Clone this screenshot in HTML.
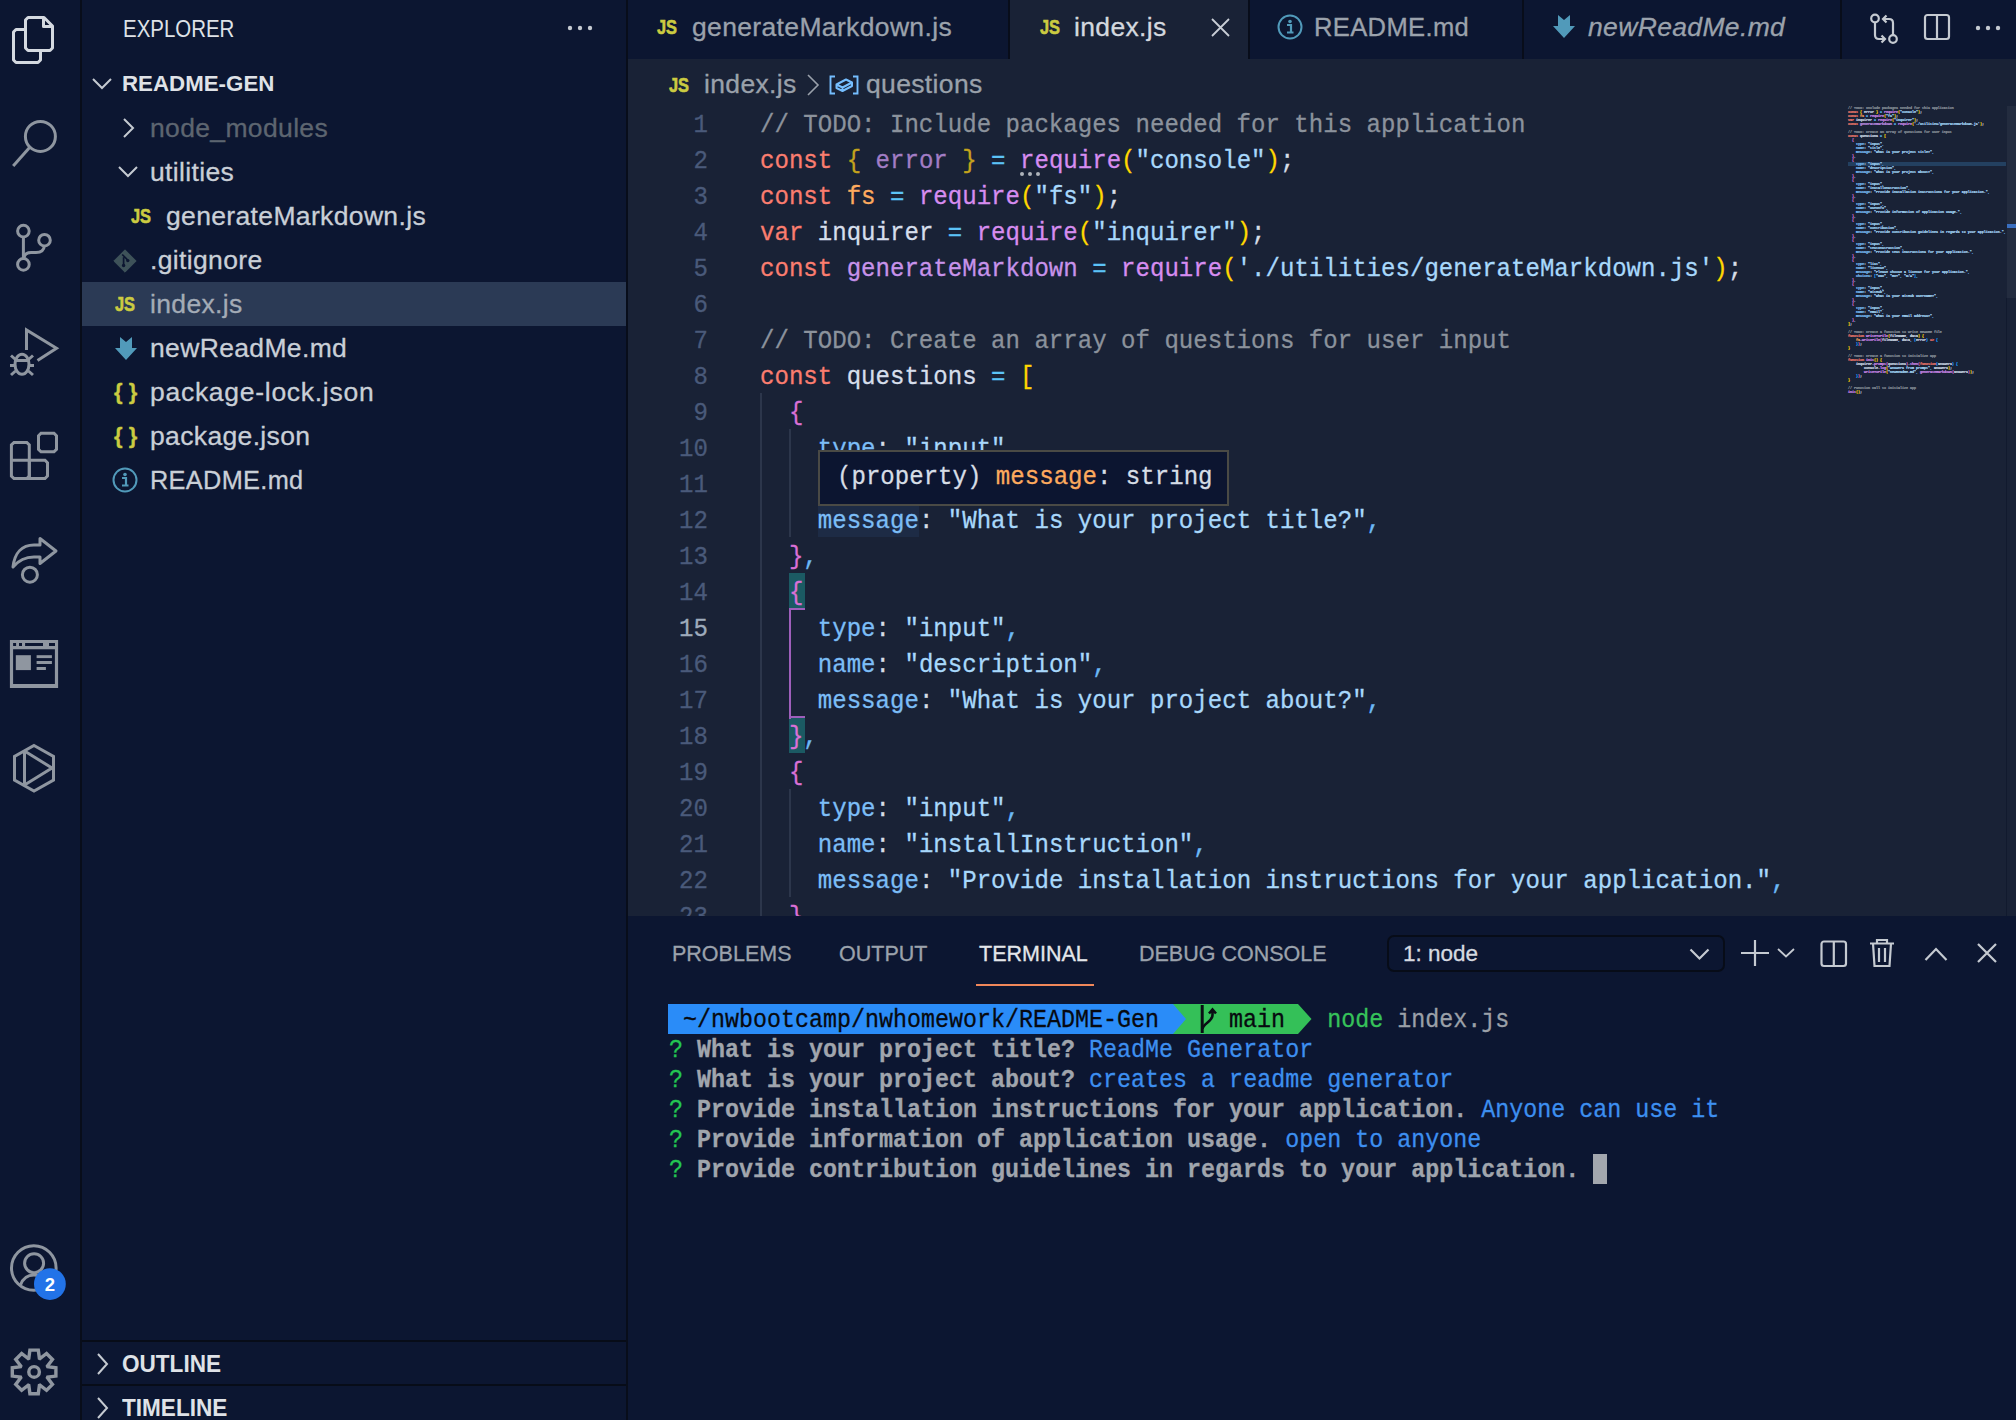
<!DOCTYPE html>
<html><head><meta charset="utf-8"><style>
*{box-sizing:border-box;margin:0;padding:0}
html,body{width:2016px;height:1420px;overflow:hidden;background:#0c1631;font-family:"Liberation Sans",sans-serif}
.code,.row,.tab,.bc,.term,.ptab,.ln{-webkit-text-stroke:0.3px currentColor}
.abs{position:absolute}
.row{position:absolute;left:0;width:544px;height:44px;font-size:26.5px;letter-spacing:0.35px;color:#c9cfd7;line-height:44px;white-space:pre}
.js{font-weight:bold;color:#cbcb41;font-size:20.5px;letter-spacing:0;white-space:pre;transform:scaleX(0.8);transform-origin:0 0;-webkit-text-stroke:0.6px #cbcb41}
.brace{font-weight:bold;color:#cbcb41;font-size:22px;letter-spacing:0;white-space:pre}
.code{font-family:"Liberation Mono",monospace;font-size:26.5px;line-height:36px;white-space:pre;transform-origin:0 0}
.cl{height:36px}
.ln{left:600px;width:108px;text-align:right;font-family:"Liberation Mono",monospace;font-size:26.5px;line-height:36px;transform:scaleX(0.90818);transform-origin:100% 0}
.mm{font-family:"Liberation Mono",monospace;font-size:26px;line-height:48px;white-space:pre;transform:scale(0.0833,0.0833);transform-origin:0 0;font-weight:bold}
.ml{height:48px}
.bc{top:62px;height:44px;line-height:44px;font-size:26.5px;letter-spacing:0.35px;color:#9aa1ab;white-space:pre}
.tab{top:5px;height:44px;line-height:44px;font-size:26.5px;letter-spacing:0.35px;white-space:pre}
.ptab{top:932px;height:44px;line-height:44px;font-size:21.5px;white-space:pre}
.term{font-family:"Liberation Mono",monospace;font-size:26px;line-height:30px;white-space:pre;transform-origin:0 0}
</style></head><body>
<div class="abs" style="left:0;top:0;width:80px;height:1420px;background:#0c1631"></div>
<svg class="abs" style="left:0;top:0" width="80" height="1420" viewBox="0 0 80 1420" fill="none" stroke-width="3">
<g stroke="#d4d9e0" stroke-linejoin="round">
<path d="M28 17.5 H44 L52.5 26 V48 L50 50.5 H28 L25.5 48 V20 Z"/>
<path d="M43.5 17.5 V26.5 H52.5"/>
<path d="M25.5 29.5 H16 L13.5 32 V60 L16 62.5 H38 L40.5 60 V50.5"/>
</g>
<g stroke="#8f96a0">
<circle cx="40.4" cy="136.4" r="15"/>
<path d="M29.8 147.2 L13.2 166"/>
<circle cx="23.4" cy="231.1" r="5.8"/>
<circle cx="23.4" cy="264.4" r="5.8"/>
<circle cx="44.5" cy="240.2" r="5.8"/>
<path d="M23.4 237 V258.6"/>
<path d="M44.3 246 C44 250.5 41 252.5 36 252.5 L31 252.5 C27 252.5 24.5 254.5 24 258"/>
<path d="M26.5 350 V330 L56.5 348.3 L37.5 360.5"/>
<ellipse cx="22" cy="364.3" rx="7" ry="10"/>
<path d="M15 360.5 H29 M10 365.5 H15 M29 365.5 H34 M11 355.5 L15.5 359.5 M33 355.5 L28.5 359.5 M11 375 L15.5 371 M33 375 L28.5 371"/>
<path d="M14 442.4 H26.8 L29.3 444.9 V476 L26.8 478.5 H14 L11.4 476 V444.9 Z"/>
<path d="M11.4 460.3 H45 L47.5 462.8 V476 L45 478.5 H26"/>
<path d="M29.3 460.3 V478.5"/>
<path d="M41 433.3 H54 L56.5 435.8 V449.3 L54 451.8 H41 L38.5 449.3 V435.8 Z"/>
<path d="M40 538.5 L56 551 L40 563.5 V557 H34 C25 557 18 561 13 567 C14.5 553 22 545 34 545 H40 Z" stroke-linejoin="round"/>
<circle cx="29.9" cy="574.7" r="7.5"/>
<path d="M34 745.5 L53.5 756.5 V780 L34 791 L14.5 780 V756.5 Z M24.5 751 V785 M24.5 751 L52 768 L24.5 785"/>
<circle cx="33.8" cy="1268" r="22.3"/>
<circle cx="34.1" cy="1263.2" r="9.5"/>
<path d="M20.5 1285 C23 1278 28 1275 34 1275 C40 1275 45 1278 47.5 1285"/>
<path d="M28.82 1358.29 L29.91 1350.10 L38.29 1350.10 L39.38 1358.29 L39.99 1358.54 L46.55 1353.52 L52.48 1359.45 L47.46 1366.01 L47.71 1366.62 L55.90 1367.71 L55.90 1376.09 L47.71 1377.18 L47.46 1377.79 L52.48 1384.35 L46.55 1390.28 L39.99 1385.26 L39.38 1385.51 L38.29 1393.70 L29.91 1393.70 L28.82 1385.51 L28.21 1385.26 L21.65 1390.28 L15.72 1384.35 L20.74 1377.79 L20.49 1377.18 L12.30 1376.09 L12.30 1367.71 L20.49 1366.62 L20.74 1366.01 L15.72 1359.45 L21.65 1353.52 L28.21 1358.54 Z" stroke-width="3.4" stroke-linejoin="miter"/>
<circle cx="34.1" cy="1371.9" r="5.3" stroke-width="3.4"/>
</g>
<g fill="#8f96a0" stroke="none">
<path d="M9.9 639.9 H58.1 V688.1 H9.9 Z M13.1 649.2 V684 H54.9 V649.2 Z M13.1 643 V646 H16.1 V643 Z M19 643 V646 H22 V643 Z M25.1 643 V646 H43 V643 Z M49 643 V646 H55 V643 Z" fill-rule="evenodd"/>
<rect x="15.8" y="655.2" width="15.1" height="14.9"/>
<rect x="36.6" y="655.2" width="15.3" height="2.9"/>
<rect x="36.6" y="661" width="15.3" height="3"/>
<rect x="36.6" y="667" width="9.3" height="3"/>
</g>
<circle cx="49.9" cy="1284.1" r="15.9" fill="#2273e8"/>
<text x="49.9" y="1290.8" fill="#fff" font-family="Liberation Sans" font-weight="bold" font-size="18.5" text-anchor="middle">2</text>
</svg>
<div class="abs" style="left:80px;top:0;width:2px;height:1420px;background:#080d1a"></div>
<div class="abs" style="left:82px;top:0;width:544px;height:1420px;background:#0c1631">
<div class="abs" style="left:41px;top:0.5px;height:56px;line-height:56px;font-size:23.5px;color:#dfe2e7;transform:scaleX(0.87);transform-origin:0 0">EXPLORER</div>
<svg class="abs" style="left:484px;top:20px" width="30" height="16"><circle cx="4" cy="8" r="2.2" fill="#c5cad1"/><circle cx="14" cy="8" r="2.2" fill="#c5cad1"/><circle cx="24" cy="8" r="2.2" fill="#c5cad1"/></svg>
<svg class="abs" style="left:9px;top:75px" width="22" height="16"><path d="M2 4 L11 13 L20 4" stroke="#c5cad1" stroke-width="2" fill="none"/></svg>
<div class="abs" style="left:40px;top:62px;height:44px;line-height:44px;font-size:22.3px;font-weight:bold;color:#dfe2e7;letter-spacing:0">README-GEN</div>
<div class="row" style="top:106px"><svg class="abs" style="left:40px;top:11px" width="14" height="22"><path d="M2 2 L11 11 L2 20" stroke="#c5cad1" stroke-width="2" fill="none"/></svg><span class="abs" style="left:68px;color:#5d6570">node_modules</span></div>
<div class="row" style="top:150px"><svg class="abs" style="left:35px;top:15px" width="22" height="14"><path d="M2 2 L11 11 L20 2" stroke="#c5cad1" stroke-width="2" fill="none"/></svg><span class="abs" style="left:68px">utilities</span></div>
<div class="row" style="top:194px"><span class="abs js" style="left:49px">JS</span><span class="abs" style="left:84px">generateMarkdown.js</span></div>
<div class="row" style="top:238px"><svg class="abs" style="left:31.3px;top:10.8px" width="24" height="24" viewBox="0 0 24 24"><path d="M12 0.8 L23.2 12 L12 23.2 L0.8 12 Z" fill="#3e5259" stroke="#3e5259" stroke-width="1" stroke-linejoin="round"/><path d="M9.2 5.5 L14.8 11.1 M10.6 8.3 V16.5" stroke="#0c1631" stroke-width="1.7" fill="none"/><circle cx="10.6" cy="16.5" r="1.7" fill="#0c1631"/><circle cx="14.8" cy="11.6" r="1.7" fill="#0c1631"/></svg><span class="abs" style="left:68px">.gitignore</span></div>
<div class="row" style="top:282px;background:#2b3a55"><span class="abs js" style="left:33px">JS</span><span class="abs" style="left:68px;color:#a3abb6">index.js</span></div>
<div class="row" style="top:326px"><svg class="abs" style="left:33px;top:11px" width="22" height="24" viewBox="0 0 22 24"><path d="M5 0 L11 5 L17 0 L17 11 L22 11 L11 23 L0 11 L5 11 Z" fill="#519aba"/></svg><span class="abs" style="left:68px">newReadMe.md</span></div>
<div class="row" style="top:370px"><span class="abs brace" style="left:32px">{ }</span><span class="abs" style="left:68px;letter-spacing:0.72px">package-lock.json</span></div>
<div class="row" style="top:414px"><span class="abs brace" style="left:32px">{ }</span><span class="abs" style="left:68px">package.json</span></div>
<div class="row" style="top:458px"><svg class="abs" style="left:30px;top:9px" width="26" height="26" viewBox="0 0 26 26"><circle cx="13" cy="13" r="11.5" stroke="#519aba" stroke-width="2" fill="none"/><circle cx="13" cy="7.5" r="1.8" fill="#519aba"/><path d="M10 11 L14 11 L14 18 M10 18.5 L16.5 18.5" stroke="#519aba" stroke-width="2.2" fill="none"/></svg><span class="abs" style="left:68px;transform:scaleX(0.955);transform-origin:0 0">README.md</span></div>
<div class="abs" style="left:0;top:1340px;width:544px;height:2px;background:#070c18"></div>
<svg class="abs" style="left:14px;top:1352px" width="14" height="24"><path d="M2 2 L11 12 L2 22" stroke="#c5cad1" stroke-width="2" fill="none"/></svg>
<div class="abs" style="left:40px;top:1342px;height:44px;line-height:44px;font-size:24px;font-weight:bold;color:#dfe2e7;transform:scaleX(0.94);transform-origin:0 0">OUTLINE</div>
<div class="abs" style="left:0;top:1384px;width:544px;height:2px;background:#070c18"></div>
<svg class="abs" style="left:14px;top:1396px" width="14" height="24"><path d="M2 2 L11 12 L2 22" stroke="#c5cad1" stroke-width="2" fill="none"/></svg>
<div class="abs" style="left:40px;top:1386px;height:44px;line-height:44px;font-size:24px;font-weight:bold;color:#dfe2e7;transform:scaleX(0.94);transform-origin:0 0">TIMELINE</div>
</div>

<div class="abs" style="left:626px;top:0;width:2px;height:1420px;background:#080d1a"></div>
<div class="abs" style="left:628.00px;top:0.00px;width:1388.00px;height:59.00px;background:#0c1631;"></div><div class="abs" style="left:1010.00px;top:0.00px;width:238.00px;height:59.00px;background:#192236;"></div><div class="abs" style="left:1008.00px;top:0.00px;width:2.00px;height:59.00px;background:#080d1a;"></div><div class="abs" style="left:1248.00px;top:0.00px;width:2.00px;height:59.00px;background:#080d1a;"></div><div class="abs" style="left:1522.00px;top:0.00px;width:2.00px;height:59.00px;background:#080d1a;"></div><div class="abs" style="left:1840.00px;top:0.00px;width:2.00px;height:59.00px;background:#080d1a;"></div><span class="abs js" style="left:657px;top:16px;line-height:22px">JS</span><div class="abs tab" style="left:692px;color:#9ba2ac">generateMarkdown.js</div><span class="abs js" style="left:1040px;top:16px;line-height:22px">JS</span><div class="abs tab" style="left:1074px;color:#d3d8df">index.js</div><svg class="abs" style="left:1210px;top:17px" width="21" height="21"><path d="M2 2 L19 19 M19 2 L2 19" stroke="#c9ced6" stroke-width="1.8"/></svg><svg class="abs" style="left:1277px;top:14px" width="26" height="26" viewBox="0 0 26 26"><circle cx="13" cy="13" r="11.5" stroke="#519aba" stroke-width="2" fill="none"/><circle cx="13" cy="7.5" r="1.8" fill="#519aba"/><path d="M10 11 L14 11 L14 18 M10 18.5 L16.5 18.5" stroke="#519aba" stroke-width="2.2" fill="none"/></svg><div class="abs tab" style="left:1314px;color:#9ba2ac;transform:scaleX(0.965);transform-origin:0 0">README.md</div><svg class="abs" style="left:1553px;top:15px" width="22" height="24" viewBox="0 0 22 24"><path d="M5 0 L11 5 L17 0 L17 11 L22 11 L11 23 L0 11 L5 11 Z" fill="#519aba"/></svg><div class="abs tab" style="left:1588px;color:#9ba2ac;font-style:italic">newReadMe.md</div><svg class="abs" style="left:1862px;top:8px" width="154" height="40" viewBox="0 0 154 40" fill="none" stroke="#c5cad1" stroke-width="2.2">
<circle cx="13" cy="10.5" r="3.8"/><circle cx="31" cy="31" r="3.8"/>
<path d="M13 14.3 V27 Q13 31 17 31 H23 M19.5 27.5 L23 31 L19.5 34.5"/>
<path d="M31 27.2 V15 Q31 11 27 11 H21 M24.5 7.5 L21 11 L24.5 14.5"/>
<rect x="63" y="7" width="24" height="24" rx="2.5"/><path d="M75 7 V31"/>
</svg><svg class="abs" style="left:1973px;top:22px" width="32" height="12"><circle cx="5" cy="6" r="2.2" fill="#c5cad1"/><circle cx="15" cy="6" r="2.2" fill="#c5cad1"/><circle cx="25" cy="6" r="2.2" fill="#c5cad1"/></svg>
<div class="abs" style="left:628px;top:59px;width:1388px;height:857px;background:#192236;overflow:hidden"><div class="abs" style="left:-628px;top:-59px;width:2016px;height:1420px"><div class="abs" style="left:760.20px;top:393.00px;width:1.60px;height:523.00px;background:#2c364b;"></div><div class="abs" style="left:789.08px;top:429.00px;width:1.60px;height:108.00px;background:#2c364b;"></div><div class="abs" style="left:789.08px;top:789.00px;width:1.60px;height:108.00px;background:#2c364b;"></div><div class="abs" style="left:789.08px;top:573.00px;width:15.44px;height:36.00px;background:#1b5a63;"></div><div class="abs" style="left:789.08px;top:717.00px;width:15.44px;height:36.00px;background:#1b5a63;"></div><div class="abs" style="left:789.08px;top:607.50px;width:2.20px;height:111.00px;background:#9e5fbb;"></div><div class="abs" style="left:789.08px;top:607.50px;width:15.44px;height:2.20px;background:#9e5fbb;"></div><div class="abs" style="left:789.08px;top:716.30px;width:15.44px;height:2.20px;background:#9e5fbb;"></div><div class="abs" style="left:817.96px;top:501.00px;width:101.08px;height:36.00px;background:#1d2b45;"></div><div class="abs ln" style="top:107.00px;color:#4a5a7a">1</div><div class="abs ln" style="top:143.00px;color:#4a5a7a">2</div><div class="abs ln" style="top:179.00px;color:#4a5a7a">3</div><div class="abs ln" style="top:215.00px;color:#4a5a7a">4</div><div class="abs ln" style="top:251.00px;color:#4a5a7a">5</div><div class="abs ln" style="top:287.00px;color:#4a5a7a">6</div><div class="abs ln" style="top:323.00px;color:#4a5a7a">7</div><div class="abs ln" style="top:359.00px;color:#4a5a7a">8</div><div class="abs ln" style="top:395.00px;color:#4a5a7a">9</div><div class="abs ln" style="top:431.00px;color:#4a5a7a">10</div><div class="abs ln" style="top:467.00px;color:#4a5a7a">11</div><div class="abs ln" style="top:503.00px;color:#4a5a7a">12</div><div class="abs ln" style="top:539.00px;color:#4a5a7a">13</div><div class="abs ln" style="top:575.00px;color:#4a5a7a">14</div><div class="abs ln" style="top:611.00px;color:#9eabbb">15</div><div class="abs ln" style="top:647.00px;color:#4a5a7a">16</div><div class="abs ln" style="top:683.00px;color:#4a5a7a">17</div><div class="abs ln" style="top:719.00px;color:#4a5a7a">18</div><div class="abs ln" style="top:755.00px;color:#4a5a7a">19</div><div class="abs ln" style="top:791.00px;color:#4a5a7a">20</div><div class="abs ln" style="top:827.00px;color:#4a5a7a">21</div><div class="abs ln" style="top:863.00px;color:#4a5a7a">22</div><div class="abs ln" style="top:899.00px;color:#4a5a7a">23</div><div class="abs code" style="left:760.20px;top:107.00px;transform:scaleX(0.90818)"><div class="cl"><span style="color:#8b929c">// TODO: Include packages needed for this application</span></div><div class="cl"><span style="color:#fa7d6f">const</span><span style="color:#d6deeb"> </span><span style="color:#ffd700;color:#c4a31c">{</span><span style="color:#d6deeb"> </span><span style="color:#d6deeb;color:#a27dc4">error</span><span style="color:#d6deeb"> </span><span style="color:#ffd700;color:#c4a31c">}</span><span style="color:#d6deeb"> </span><span style="color:#5cc3f7">=</span><span style="color:#d6deeb"> </span><span style="color:#d68cf0">require</span><span style="color:#ffd700">(</span><span style="color:#a8d8fb">&quot;console&quot;</span><span style="color:#ffd700">)</span><span style="color:#d6dde6">;</span></div><div class="cl"><span style="color:#fa7d6f">const</span><span style="color:#d6deeb"> </span><span style="color:#fdaa5e">fs</span><span style="color:#d6deeb"> </span><span style="color:#5cc3f7">=</span><span style="color:#d6deeb"> </span><span style="color:#d68cf0">require</span><span style="color:#ffd700">(</span><span style="color:#a8d8fb">&quot;fs&quot;</span><span style="color:#ffd700">)</span><span style="color:#d6dde6">;</span></div><div class="cl"><span style="color:#fa7d6f">var</span><span style="color:#d6deeb"> </span><span style="color:#d6deeb">inquirer</span><span style="color:#d6deeb"> </span><span style="color:#5cc3f7">=</span><span style="color:#d6deeb"> </span><span style="color:#d68cf0">require</span><span style="color:#ffd700">(</span><span style="color:#a8d8fb">&quot;inquirer&quot;</span><span style="color:#ffd700">)</span><span style="color:#d6dde6">;</span></div><div class="cl"><span style="color:#fa7d6f">const</span><span style="color:#d6deeb"> </span><span style="color:#c792ea">generateMarkdown</span><span style="color:#d6deeb"> </span><span style="color:#5cc3f7">=</span><span style="color:#d6deeb"> </span><span style="color:#d68cf0">require</span><span style="color:#ffd700">(</span><span style="color:#a8d8fb">&#x27;./utilities/generateMarkdown.js&#x27;</span><span style="color:#ffd700">)</span><span style="color:#d6dde6">;</span></div><div class="cl"></div><div class="cl"><span style="color:#8b929c">// TODO: Create an array of questions for user input</span></div><div class="cl"><span style="color:#fa7d6f">const</span><span style="color:#d6deeb"> </span><span style="color:#d6deeb">questions</span><span style="color:#d6deeb"> </span><span style="color:#5cc3f7">=</span><span style="color:#d6deeb"> </span><span style="color:#ffd700">[</span></div><div class="cl"><span style="color:#d6deeb"> </span><span style="color:#d6deeb"> </span><span style="color:#da70d6">{</span></div><div class="cl"><span style="color:#d6deeb"> </span><span style="color:#d6deeb"> </span><span style="color:#d6deeb"> </span><span style="color:#d6deeb"> </span><span style="color:#7cbdf6">type</span><span style="color:#d6dde6">:</span><span style="color:#d6deeb"> </span><span style="color:#a8d8fb">&quot;input&quot;</span><span style="color:#6cb8f5">,</span></div><div class="cl"><span style="color:#d6deeb"> </span><span style="color:#d6deeb"> </span><span style="color:#d6deeb"> </span><span style="color:#d6deeb"> </span><span style="color:#7cbdf6">name</span><span style="color:#d6dde6">:</span><span style="color:#d6deeb"> </span><span style="color:#a8d8fb">&quot;title&quot;</span><span style="color:#6cb8f5">,</span></div><div class="cl"><span style="color:#d6deeb"> </span><span style="color:#d6deeb"> </span><span style="color:#d6deeb"> </span><span style="color:#d6deeb"> </span><span style="color:#7cbdf6">message</span><span style="color:#d6dde6">:</span><span style="color:#d6deeb"> </span><span style="color:#a8d8fb">&quot;What is your project title?&quot;</span><span style="color:#6cb8f5">,</span></div><div class="cl"><span style="color:#d6deeb"> </span><span style="color:#d6deeb"> </span><span style="color:#da70d6">}</span><span style="color:#6cb8f5">,</span></div><div class="cl"><span style="color:#d6deeb"> </span><span style="color:#d6deeb"> </span><span style="color:#da70d6">{</span></div><div class="cl"><span style="color:#d6deeb"> </span><span style="color:#d6deeb"> </span><span style="color:#d6deeb"> </span><span style="color:#d6deeb"> </span><span style="color:#7cbdf6">type</span><span style="color:#d6dde6">:</span><span style="color:#d6deeb"> </span><span style="color:#a8d8fb">&quot;input&quot;</span><span style="color:#6cb8f5">,</span></div><div class="cl"><span style="color:#d6deeb"> </span><span style="color:#d6deeb"> </span><span style="color:#d6deeb"> </span><span style="color:#d6deeb"> </span><span style="color:#7cbdf6">name</span><span style="color:#d6dde6">:</span><span style="color:#d6deeb"> </span><span style="color:#a8d8fb">&quot;description&quot;</span><span style="color:#6cb8f5">,</span></div><div class="cl"><span style="color:#d6deeb"> </span><span style="color:#d6deeb"> </span><span style="color:#d6deeb"> </span><span style="color:#d6deeb"> </span><span style="color:#7cbdf6">message</span><span style="color:#d6dde6">:</span><span style="color:#d6deeb"> </span><span style="color:#a8d8fb">&quot;What is your project about?&quot;</span><span style="color:#6cb8f5">,</span></div><div class="cl"><span style="color:#d6deeb"> </span><span style="color:#d6deeb"> </span><span style="color:#da70d6">}</span><span style="color:#6cb8f5">,</span></div><div class="cl"><span style="color:#d6deeb"> </span><span style="color:#d6deeb"> </span><span style="color:#da70d6">{</span></div><div class="cl"><span style="color:#d6deeb"> </span><span style="color:#d6deeb"> </span><span style="color:#d6deeb"> </span><span style="color:#d6deeb"> </span><span style="color:#7cbdf6">type</span><span style="color:#d6dde6">:</span><span style="color:#d6deeb"> </span><span style="color:#a8d8fb">&quot;input&quot;</span><span style="color:#6cb8f5">,</span></div><div class="cl"><span style="color:#d6deeb"> </span><span style="color:#d6deeb"> </span><span style="color:#d6deeb"> </span><span style="color:#d6deeb"> </span><span style="color:#7cbdf6">name</span><span style="color:#d6dde6">:</span><span style="color:#d6deeb"> </span><span style="color:#a8d8fb">&quot;installInstruction&quot;</span><span style="color:#6cb8f5">,</span></div><div class="cl"><span style="color:#d6deeb"> </span><span style="color:#d6deeb"> </span><span style="color:#d6deeb"> </span><span style="color:#d6deeb"> </span><span style="color:#7cbdf6">message</span><span style="color:#d6dde6">:</span><span style="color:#d6deeb"> </span><span style="color:#a8d8fb">&quot;Provide installation instructions for your application.&quot;</span><span style="color:#6cb8f5">,</span></div><div class="cl"><span style="color:#d6deeb"> </span><span style="color:#d6deeb"> </span><span style="color:#da70d6">}</span><span style="color:#6cb8f5">,</span></div></div><div class="abs" style="left:1020.00px;top:172.00px;width:4.00px;height:4.00px;background:#aeb3ba;border-radius:2px"></div><div class="abs" style="left:1028.00px;top:172.00px;width:4.00px;height:4.00px;background:#aeb3ba;border-radius:2px"></div><div class="abs" style="left:1036.00px;top:172.00px;width:4.00px;height:4.00px;background:#aeb3ba;border-radius:2px"></div><div class="abs" style="left:818px;top:450px;width:411px;height:56px;background:#0c1530;border:2px solid #4a4a45"></div><div class="abs code" style="left:836.8px;top:451.0px;transform:scaleX(0.90818);line-height:52px"><span style="color:#d6dde6">(property) </span><span style="color:#fdaa5e">message</span><span style="color:#d6dde6">: string</span></div><div class="abs" style="left:1848.00px;top:162.00px;width:158.00px;height:4.00px;background:#234060;"></div><div class="abs" style="left:1848px;top:106px;font-family:'Liberation Mono',monospace;font-size:3.3333px;line-height:4px;white-space:pre;font-weight:bold;-webkit-text-stroke:0.2px currentColor"><div style="height:4px"><span style="color:#8b929c">// TODO: Include packages needed for this application</span></div><div style="height:4px"><span style="color:#fa7d6f">const</span><span style="color:#d6deeb"> </span><span style="color:#ffd700">{</span><span style="color:#d6deeb"> </span><span style="color:#d6deeb">error</span><span style="color:#d6deeb"> </span><span style="color:#ffd700">}</span><span style="color:#d6deeb"> </span><span style="color:#5cc3f7">=</span><span style="color:#d6deeb"> </span><span style="color:#d68cf0">require</span><span style="color:#ffd700">(</span><span style="color:#a8d8fb">&quot;console&quot;</span><span style="color:#ffd700">)</span><span style="color:#d6dde6">;</span></div><div style="height:4px"><span style="color:#fa7d6f">const</span><span style="color:#d6deeb"> </span><span style="color:#fdaa5e">fs</span><span style="color:#d6deeb"> </span><span style="color:#5cc3f7">=</span><span style="color:#d6deeb"> </span><span style="color:#d68cf0">require</span><span style="color:#ffd700">(</span><span style="color:#a8d8fb">&quot;fs&quot;</span><span style="color:#ffd700">)</span><span style="color:#d6dde6">;</span></div><div style="height:4px"><span style="color:#fa7d6f">var</span><span style="color:#d6deeb"> </span><span style="color:#d6deeb">inquirer</span><span style="color:#d6deeb"> </span><span style="color:#5cc3f7">=</span><span style="color:#d6deeb"> </span><span style="color:#d68cf0">require</span><span style="color:#ffd700">(</span><span style="color:#a8d8fb">&quot;inquirer&quot;</span><span style="color:#ffd700">)</span><span style="color:#d6dde6">;</span></div><div style="height:4px"><span style="color:#fa7d6f">const</span><span style="color:#d6deeb"> </span><span style="color:#c792ea">generateMarkdown</span><span style="color:#d6deeb"> </span><span style="color:#5cc3f7">=</span><span style="color:#d6deeb"> </span><span style="color:#d68cf0">require</span><span style="color:#ffd700">(</span><span style="color:#a8d8fb">&#x27;./utilities/generateMarkdown.js&#x27;</span><span style="color:#ffd700">)</span><span style="color:#d6dde6">;</span></div><div style="height:4px">&nbsp;</div><div style="height:4px"><span style="color:#8b929c">// TODO: Create an array of questions for user input</span></div><div style="height:4px"><span style="color:#fa7d6f">const</span><span style="color:#d6deeb"> </span><span style="color:#d6deeb">questions</span><span style="color:#d6deeb"> </span><span style="color:#5cc3f7">=</span><span style="color:#d6deeb"> </span><span style="color:#ffd700">[</span></div><div style="height:4px"><span style="color:#d6deeb"> </span><span style="color:#d6deeb"> </span><span style="color:#da70d6">{</span></div><div style="height:4px"><span style="color:#d6deeb"> </span><span style="color:#d6deeb"> </span><span style="color:#d6deeb"> </span><span style="color:#d6deeb"> </span><span style="color:#7cbdf6">type</span><span style="color:#d6dde6">:</span><span style="color:#d6deeb"> </span><span style="color:#a8d8fb">&quot;input&quot;</span><span style="color:#6cb8f5">,</span></div><div style="height:4px"><span style="color:#d6deeb"> </span><span style="color:#d6deeb"> </span><span style="color:#d6deeb"> </span><span style="color:#d6deeb"> </span><span style="color:#7cbdf6">name</span><span style="color:#d6dde6">:</span><span style="color:#d6deeb"> </span><span style="color:#a8d8fb">&quot;title&quot;</span><span style="color:#6cb8f5">,</span></div><div style="height:4px"><span style="color:#d6deeb"> </span><span style="color:#d6deeb"> </span><span style="color:#d6deeb"> </span><span style="color:#d6deeb"> </span><span style="color:#7cbdf6">message</span><span style="color:#d6dde6">:</span><span style="color:#d6deeb"> </span><span style="color:#a8d8fb">&quot;What is your project title?&quot;</span><span style="color:#6cb8f5">,</span></div><div style="height:4px"><span style="color:#d6deeb"> </span><span style="color:#d6deeb"> </span><span style="color:#da70d6">}</span><span style="color:#6cb8f5">,</span></div><div style="height:4px"><span style="color:#d6deeb"> </span><span style="color:#d6deeb"> </span><span style="color:#da70d6">{</span></div><div style="height:4px"><span style="color:#d6deeb"> </span><span style="color:#d6deeb"> </span><span style="color:#d6deeb"> </span><span style="color:#d6deeb"> </span><span style="color:#7cbdf6">type</span><span style="color:#d6dde6">:</span><span style="color:#d6deeb"> </span><span style="color:#a8d8fb">&quot;input&quot;</span><span style="color:#6cb8f5">,</span></div><div style="height:4px"><span style="color:#d6deeb"> </span><span style="color:#d6deeb"> </span><span style="color:#d6deeb"> </span><span style="color:#d6deeb"> </span><span style="color:#7cbdf6">name</span><span style="color:#d6dde6">:</span><span style="color:#d6deeb"> </span><span style="color:#a8d8fb">&quot;description&quot;</span><span style="color:#6cb8f5">,</span></div><div style="height:4px"><span style="color:#d6deeb"> </span><span style="color:#d6deeb"> </span><span style="color:#d6deeb"> </span><span style="color:#d6deeb"> </span><span style="color:#7cbdf6">message</span><span style="color:#d6dde6">:</span><span style="color:#d6deeb"> </span><span style="color:#a8d8fb">&quot;What is your project about?&quot;</span><span style="color:#6cb8f5">,</span></div><div style="height:4px"><span style="color:#d6deeb"> </span><span style="color:#d6deeb"> </span><span style="color:#da70d6">}</span><span style="color:#6cb8f5">,</span></div><div style="height:4px"><span style="color:#d6deeb"> </span><span style="color:#d6deeb"> </span><span style="color:#da70d6">{</span></div><div style="height:4px"><span style="color:#d6deeb"> </span><span style="color:#d6deeb"> </span><span style="color:#d6deeb"> </span><span style="color:#d6deeb"> </span><span style="color:#7cbdf6">type</span><span style="color:#d6dde6">:</span><span style="color:#d6deeb"> </span><span style="color:#a8d8fb">&quot;input&quot;</span><span style="color:#6cb8f5">,</span></div><div style="height:4px"><span style="color:#d6deeb"> </span><span style="color:#d6deeb"> </span><span style="color:#d6deeb"> </span><span style="color:#d6deeb"> </span><span style="color:#7cbdf6">name</span><span style="color:#d6dde6">:</span><span style="color:#d6deeb"> </span><span style="color:#a8d8fb">&quot;installInstruction&quot;</span><span style="color:#6cb8f5">,</span></div><div style="height:4px"><span style="color:#d6deeb"> </span><span style="color:#d6deeb"> </span><span style="color:#d6deeb"> </span><span style="color:#d6deeb"> </span><span style="color:#7cbdf6">message</span><span style="color:#d6dde6">:</span><span style="color:#d6deeb"> </span><span style="color:#a8d8fb">&quot;Provide installation instructions for your application.&quot;</span><span style="color:#6cb8f5">,</span></div><div style="height:4px"><span style="color:#d6deeb"> </span><span style="color:#d6deeb"> </span><span style="color:#da70d6">}</span><span style="color:#6cb8f5">,</span></div><div style="height:4px"><span style="color:#d6deeb"> </span><span style="color:#d6deeb"> </span><span style="color:#da70d6">{</span></div><div style="height:4px"><span style="color:#d6deeb"> </span><span style="color:#d6deeb"> </span><span style="color:#d6deeb"> </span><span style="color:#d6deeb"> </span><span style="color:#7cbdf6">type</span><span style="color:#d6dde6">:</span><span style="color:#d6deeb"> </span><span style="color:#a8d8fb">&quot;input&quot;</span><span style="color:#6cb8f5">,</span></div><div style="height:4px"><span style="color:#d6deeb"> </span><span style="color:#d6deeb"> </span><span style="color:#d6deeb"> </span><span style="color:#d6deeb"> </span><span style="color:#7cbdf6">name</span><span style="color:#d6dde6">:</span><span style="color:#d6deeb"> </span><span style="color:#a8d8fb">&quot;useInfo&quot;</span><span style="color:#6cb8f5">,</span></div><div style="height:4px"><span style="color:#d6deeb"> </span><span style="color:#d6deeb"> </span><span style="color:#d6deeb"> </span><span style="color:#d6deeb"> </span><span style="color:#7cbdf6">message</span><span style="color:#d6dde6">:</span><span style="color:#d6deeb"> </span><span style="color:#a8d8fb">&quot;Provide information of application usage.&quot;</span><span style="color:#6cb8f5">,</span></div><div style="height:4px"><span style="color:#d6deeb"> </span><span style="color:#d6deeb"> </span><span style="color:#da70d6">}</span><span style="color:#6cb8f5">,</span></div><div style="height:4px"><span style="color:#d6deeb"> </span><span style="color:#d6deeb"> </span><span style="color:#da70d6">{</span></div><div style="height:4px"><span style="color:#d6deeb"> </span><span style="color:#d6deeb"> </span><span style="color:#d6deeb"> </span><span style="color:#d6deeb"> </span><span style="color:#7cbdf6">type</span><span style="color:#d6dde6">:</span><span style="color:#d6deeb"> </span><span style="color:#a8d8fb">&quot;input&quot;</span><span style="color:#6cb8f5">,</span></div><div style="height:4px"><span style="color:#d6deeb"> </span><span style="color:#d6deeb"> </span><span style="color:#d6deeb"> </span><span style="color:#d6deeb"> </span><span style="color:#7cbdf6">name</span><span style="color:#d6dde6">:</span><span style="color:#d6deeb"> </span><span style="color:#a8d8fb">&quot;contribution&quot;</span><span style="color:#6cb8f5">,</span></div><div style="height:4px"><span style="color:#d6deeb"> </span><span style="color:#d6deeb"> </span><span style="color:#d6deeb"> </span><span style="color:#d6deeb"> </span><span style="color:#7cbdf6">message</span><span style="color:#d6dde6">:</span><span style="color:#d6deeb"> </span><span style="color:#a8d8fb">&quot;Provide contribution guidelines in regards to your application.&quot;</span><span style="color:#6cb8f5">,</span></div><div style="height:4px"><span style="color:#d6deeb"> </span><span style="color:#d6deeb"> </span><span style="color:#da70d6">}</span><span style="color:#6cb8f5">,</span></div><div style="height:4px"><span style="color:#d6deeb"> </span><span style="color:#d6deeb"> </span><span style="color:#da70d6">{</span></div><div style="height:4px"><span style="color:#d6deeb"> </span><span style="color:#d6deeb"> </span><span style="color:#d6deeb"> </span><span style="color:#d6deeb"> </span><span style="color:#7cbdf6">type</span><span style="color:#d6dde6">:</span><span style="color:#d6deeb"> </span><span style="color:#a8d8fb">&quot;input&quot;</span><span style="color:#6cb8f5">,</span></div><div style="height:4px"><span style="color:#d6deeb"> </span><span style="color:#d6deeb"> </span><span style="color:#d6deeb"> </span><span style="color:#d6deeb"> </span><span style="color:#7cbdf6">name</span><span style="color:#d6dde6">:</span><span style="color:#d6deeb"> </span><span style="color:#a8d8fb">&quot;testInstruction&quot;</span><span style="color:#6cb8f5">,</span></div><div style="height:4px"><span style="color:#d6deeb"> </span><span style="color:#d6deeb"> </span><span style="color:#d6deeb"> </span><span style="color:#d6deeb"> </span><span style="color:#7cbdf6">message</span><span style="color:#d6dde6">:</span><span style="color:#d6deeb"> </span><span style="color:#a8d8fb">&quot;Provide test instructions for your application.&quot;</span><span style="color:#6cb8f5">,</span></div><div style="height:4px"><span style="color:#d6deeb"> </span><span style="color:#d6deeb"> </span><span style="color:#da70d6">}</span><span style="color:#6cb8f5">,</span></div><div style="height:4px"><span style="color:#d6deeb"> </span><span style="color:#d6deeb"> </span><span style="color:#da70d6">{</span></div><div style="height:4px"><span style="color:#d6deeb"> </span><span style="color:#d6deeb"> </span><span style="color:#d6deeb"> </span><span style="color:#d6deeb"> </span><span style="color:#7cbdf6">type</span><span style="color:#d6dde6">:</span><span style="color:#d6deeb"> </span><span style="color:#a8d8fb">&quot;list&quot;</span><span style="color:#6cb8f5">,</span></div><div style="height:4px"><span style="color:#d6deeb"> </span><span style="color:#d6deeb"> </span><span style="color:#d6deeb"> </span><span style="color:#d6deeb"> </span><span style="color:#7cbdf6">name</span><span style="color:#d6dde6">:</span><span style="color:#d6deeb"> </span><span style="color:#a8d8fb">&quot;license&quot;</span><span style="color:#6cb8f5">,</span></div><div style="height:4px"><span style="color:#d6deeb"> </span><span style="color:#d6deeb"> </span><span style="color:#d6deeb"> </span><span style="color:#d6deeb"> </span><span style="color:#7cbdf6">message</span><span style="color:#d6dde6">:</span><span style="color:#d6deeb"> </span><span style="color:#a8d8fb">&quot;Please choose a license for your application.&quot;</span><span style="color:#6cb8f5">,</span></div><div style="height:4px"><span style="color:#d6deeb"> </span><span style="color:#d6deeb"> </span><span style="color:#d6deeb"> </span><span style="color:#d6deeb"> </span><span style="color:#7cbdf6">choices</span><span style="color:#d6dde6">:</span><span style="color:#d6deeb"> </span><span style="color:#179fff">[</span><span style="color:#a8d8fb">&quot;ISC&quot;</span><span style="color:#6cb8f5">,</span><span style="color:#d6deeb"> </span><span style="color:#a8d8fb">&quot;MIT&quot;</span><span style="color:#6cb8f5">,</span><span style="color:#d6deeb"> </span><span style="color:#a8d8fb">&quot;N/A&quot;</span><span style="color:#179fff">]</span><span style="color:#6cb8f5">,</span></div><div style="height:4px"><span style="color:#d6deeb"> </span><span style="color:#d6deeb"> </span><span style="color:#da70d6">}</span><span style="color:#6cb8f5">,</span></div><div style="height:4px"><span style="color:#d6deeb"> </span><span style="color:#d6deeb"> </span><span style="color:#da70d6">{</span></div><div style="height:4px"><span style="color:#d6deeb"> </span><span style="color:#d6deeb"> </span><span style="color:#d6deeb"> </span><span style="color:#d6deeb"> </span><span style="color:#7cbdf6">type</span><span style="color:#d6dde6">:</span><span style="color:#d6deeb"> </span><span style="color:#a8d8fb">&quot;input&quot;</span><span style="color:#6cb8f5">,</span></div><div style="height:4px"><span style="color:#d6deeb"> </span><span style="color:#d6deeb"> </span><span style="color:#d6deeb"> </span><span style="color:#d6deeb"> </span><span style="color:#7cbdf6">name</span><span style="color:#d6dde6">:</span><span style="color:#d6deeb"> </span><span style="color:#a8d8fb">&quot;GitHub&quot;</span><span style="color:#6cb8f5">,</span></div><div style="height:4px"><span style="color:#d6deeb"> </span><span style="color:#d6deeb"> </span><span style="color:#d6deeb"> </span><span style="color:#d6deeb"> </span><span style="color:#7cbdf6">message</span><span style="color:#d6dde6">:</span><span style="color:#d6deeb"> </span><span style="color:#a8d8fb">&quot;What is your GitHub username?&quot;</span><span style="color:#6cb8f5">,</span></div><div style="height:4px"><span style="color:#d6deeb"> </span><span style="color:#d6deeb"> </span><span style="color:#da70d6">}</span><span style="color:#6cb8f5">,</span></div><div style="height:4px"><span style="color:#d6deeb"> </span><span style="color:#d6deeb"> </span><span style="color:#da70d6">{</span></div><div style="height:4px"><span style="color:#d6deeb"> </span><span style="color:#d6deeb"> </span><span style="color:#d6deeb"> </span><span style="color:#d6deeb"> </span><span style="color:#7cbdf6">type</span><span style="color:#d6dde6">:</span><span style="color:#d6deeb"> </span><span style="color:#a8d8fb">&quot;input&quot;</span><span style="color:#6cb8f5">,</span></div><div style="height:4px"><span style="color:#d6deeb"> </span><span style="color:#d6deeb"> </span><span style="color:#d6deeb"> </span><span style="color:#d6deeb"> </span><span style="color:#7cbdf6">name</span><span style="color:#d6dde6">:</span><span style="color:#d6deeb"> </span><span style="color:#a8d8fb">&quot;email&quot;</span><span style="color:#6cb8f5">,</span></div><div style="height:4px"><span style="color:#d6deeb"> </span><span style="color:#d6deeb"> </span><span style="color:#d6deeb"> </span><span style="color:#d6deeb"> </span><span style="color:#7cbdf6">message</span><span style="color:#d6dde6">:</span><span style="color:#d6deeb"> </span><span style="color:#a8d8fb">&quot;What is your email address?&quot;</span><span style="color:#6cb8f5">,</span></div><div style="height:4px"><span style="color:#d6deeb"> </span><span style="color:#d6deeb"> </span><span style="color:#da70d6">}</span><span style="color:#6cb8f5">,</span></div><div style="height:4px"><span style="color:#ffd700">]</span><span style="color:#d6dde6">;</span></div><div style="height:4px">&nbsp;</div><div style="height:4px"><span style="color:#8b929c">// TODO: Create a function to write README file</span></div><div style="height:4px"><span style="color:#fa7d6f">function</span><span style="color:#d6deeb"> </span><span style="color:#d68cf0">writeToFile</span><span style="color:#ffd700">(</span><span style="color:#d6deeb">fileName</span><span style="color:#6cb8f5">,</span><span style="color:#d6deeb"> </span><span style="color:#d6deeb">data</span><span style="color:#ffd700">)</span><span style="color:#d6deeb"> </span><span style="color:#ffd700">{</span></div><div style="height:4px"><span style="color:#d6deeb"> </span><span style="color:#d6deeb"> </span><span style="color:#d6deeb"> </span><span style="color:#d6deeb"> </span><span style="color:#fdaa5e">fs</span><span style="color:#d6dde6">.</span><span style="color:#d68cf0">writeFile</span><span style="color:#da70d6">(</span><span style="color:#d6deeb">fileName</span><span style="color:#6cb8f5">,</span><span style="color:#d6deeb"> </span><span style="color:#d6deeb">data</span><span style="color:#6cb8f5">,</span><span style="color:#d6deeb"> </span><span style="color:#179fff">(</span><span style="color:#d6deeb">error</span><span style="color:#179fff">)</span><span style="color:#d6deeb"> </span><span style="color:#fa7d6f">=&gt;</span><span style="color:#d6deeb"> </span><span style="color:#179fff">{</span></div><div style="height:4px"><span style="color:#d6deeb"> </span><span style="color:#d6deeb"> </span><span style="color:#d6deeb"> </span><span style="color:#d6deeb"> </span><span style="color:#179fff">}</span><span style="color:#da70d6">)</span><span style="color:#d6dde6">;</span></div><div style="height:4px"><span style="color:#ffd700">}</span></div><div style="height:4px">&nbsp;</div><div style="height:4px"><span style="color:#8b929c">// TODO: Create a function to initialize app</span></div><div style="height:4px"><span style="color:#fa7d6f">function</span><span style="color:#d6deeb"> </span><span style="color:#d68cf0">init</span><span style="color:#ffd700">(</span><span style="color:#ffd700">)</span><span style="color:#d6deeb"> </span><span style="color:#ffd700">{</span></div><div style="height:4px"><span style="color:#d6deeb"> </span><span style="color:#d6deeb"> </span><span style="color:#d6deeb"> </span><span style="color:#d6deeb"> </span><span style="color:#d6deeb">inquirer</span><span style="color:#d6dde6">.</span><span style="color:#d68cf0">prompt</span><span style="color:#da70d6">(</span><span style="color:#d6deeb">questions</span><span style="color:#da70d6">)</span><span style="color:#d6dde6">.</span><span style="color:#d68cf0">then</span><span style="color:#da70d6">(</span><span style="color:#fa7d6f">function</span><span style="color:#179fff">(</span><span style="color:#d6deeb">answers</span><span style="color:#179fff">)</span><span style="color:#d6deeb"> </span><span style="color:#179fff">{</span></div><div style="height:4px"><span style="color:#d6deeb"> </span><span style="color:#d6deeb"> </span><span style="color:#d6deeb"> </span><span style="color:#d6deeb"> </span><span style="color:#d6deeb"> </span><span style="color:#d6deeb"> </span><span style="color:#d6deeb"> </span><span style="color:#d6deeb"> </span><span style="color:#d6deeb">console</span><span style="color:#d6dde6">.</span><span style="color:#d68cf0">log</span><span style="color:#ffd700">(</span><span style="color:#a8d8fb">&quot;Answers from prompt&quot;</span><span style="color:#6cb8f5">,</span><span style="color:#d6deeb"> </span><span style="color:#d6deeb">answers</span><span style="color:#ffd700">)</span><span style="color:#d6dde6">;</span></div><div style="height:4px"><span style="color:#d6deeb"> </span><span style="color:#d6deeb"> </span><span style="color:#d6deeb"> </span><span style="color:#d6deeb"> </span><span style="color:#d6deeb"> </span><span style="color:#d6deeb"> </span><span style="color:#d6deeb"> </span><span style="color:#d6deeb"> </span><span style="color:#d68cf0">writeToFile</span><span style="color:#ffd700">(</span><span style="color:#a8d8fb">&quot;newReadMe.md&quot;</span><span style="color:#6cb8f5">,</span><span style="color:#d6deeb"> </span><span style="color:#d68cf0">generateMarkdown</span><span style="color:#da70d6">(</span><span style="color:#d6deeb">answers</span><span style="color:#da70d6">)</span><span style="color:#ffd700">)</span><span style="color:#d6dde6">;</span></div><div style="height:4px"><span style="color:#d6deeb"> </span><span style="color:#d6deeb"> </span><span style="color:#d6deeb"> </span><span style="color:#d6deeb"> </span><span style="color:#179fff">}</span><span style="color:#da70d6">)</span><span style="color:#d6dde6">;</span></div><div style="height:4px"><span style="color:#ffd700">}</span></div><div style="height:4px">&nbsp;</div><div style="height:4px"><span style="color:#8b929c">// Function call to initialize app</span></div><div style="height:4px"><span style="color:#d68cf0">init</span><span style="color:#ffd700">(</span><span style="color:#ffd700">)</span><span style="color:#d6dde6">;</span></div></div><div class="abs" style="left:2006.00px;top:297.50px;width:1.00px;height:618.50px;background:#111a2e;"></div><div class="abs" style="left:2007.00px;top:106.00px;width:9.00px;height:191.50px;background:#232c3f;"></div><div class="abs" style="left:2007.00px;top:224.00px;width:9.00px;height:4.00px;background:#3a6fc0;"></div><span class="abs js" style="left:669px;top:74.2px;line-height:22px">JS</span><div class="abs bc" style="left:704px">index.js</div><svg class="abs" style="left:805px;top:73px" width="16" height="24"><path d="M3 2 L13 12 L3 22" stroke="#9aa1ab" stroke-width="1.6" fill="none"/></svg><svg class="abs" style="left:829px;top:75px" width="30" height="20" viewBox="0 0 30 20"><path d="M6 1.5 H1.5 V18.5 H6 M24 1.5 H28.5 V18.5 H24" stroke="#75beff" stroke-width="1.9" fill="none"/><path d="M7.5 9.5 L17 4.5 L23 7.5 L23 11 L13.5 16 L7.5 13 Z M7.5 9.5 L13.5 12.5 L23 7.5 M13.5 12.5 L13.5 16" stroke="#75beff" stroke-width="2" fill="none" stroke-linejoin="round"/></svg><div class="abs bc" style="left:866px">questions</div></div></div>
<div class="abs" style="left:628px;top:916px;width:1388px;height:504px;background:#0c1631"></div>
<div class="abs ptab" style="left:672px;color:#9ba2ac">PROBLEMS</div><div class="abs ptab" style="left:839px;color:#9ba2ac">OUTPUT</div><div class="abs ptab" style="left:979px;color:#e3e6ea">TERMINAL</div><div class="abs" style="left:976.00px;top:983.50px;width:118.00px;height:2.60px;background:#f0875a;"></div><div class="abs ptab" style="left:1139px;color:#9ba2ac">DEBUG CONSOLE</div><div class="abs" style="left:1386.5px;top:934.5px;width:338.5px;height:37px;border:2px solid #070c18;border-radius:7px;background:#0c1631"></div><div class="abs ptab" style="left:1403px;color:#d6dae0;font-size:22.5px">1: node</div><svg class="abs" style="left:1680px;top:935px" width="336" height="40" viewBox="0 0 336 40" fill="none" stroke="#c5cad1" stroke-width="2.2">
<path d="M10.5 14.5 L19.5 23.5 L28.5 14.5"/>
<path d="M75 5 V31 M61 18 H89"/>
<path d="M98 14 L106 21.5 L114 14" stroke-width="1.8"/>
<rect x="141.5" y="6.5" width="24.5" height="24.5" rx="2.5"/><path d="M153.8 6.5 V31"/>
<path d="M190 8.5 H214 M197 8.5 V5 H207 V8.5 M193 8.5 L194.5 31 H209.5 L211 8.5 M199 13 V27 M205 13 V27"/>
<path d="M245.5 25 L256 14 L266.5 25"/>
<path d="M298 9 L316 27 M316 9 L298 27"/>
</svg><div class="abs" style="left:668.00px;top:1004.00px;width:505.00px;height:30.00px;background:#2a8cf8;"></div><svg class="abs" style="left:1172px;top:1004px" width="142" height="30" viewBox="0 0 142 30"><path d="M0 0 H126 L139.5 15 L126 30 H0 Z" fill="#34c058"/><path d="M0 0 H1 L14 15 L1 30 H0 Z" fill="#2a8cf8"/><path d="M30.2 1 V29" stroke="#0a0e14" stroke-width="3"/><path d="M30.5 25 C31 19 40.5 18 40.5 11 V6.5 M37 9.5 L40.5 5.5 L44 9.5" stroke="#0a0e14" stroke-width="2.6" fill="none"/></svg><div class="abs term" style="left:668.60px;top:1005px;transform:scaleX(0.89744)"><span style="color:#07090f"> ~/nwbootcamp/nwhomework/README-Gen     </span><span style="color:#07090f">main</span>   <span style="color:#36c25a">node</span> <span style="color:#9ba0a8">index.js</span></div><div class="abs term" style="left:668.60px;top:1035px;transform:scaleX(0.89744)"><span style="color:#23c552">?</span> <span style="color:#a0a5ad;font-weight:bold">What is your project title?</span> <span style="color:#3d8ff0">ReadMe Generator</span></div><div class="abs term" style="left:668.60px;top:1065px;transform:scaleX(0.89744)"><span style="color:#23c552">?</span> <span style="color:#a0a5ad;font-weight:bold">What is your project about?</span> <span style="color:#3d8ff0">creates a readme generator</span></div><div class="abs term" style="left:668.60px;top:1095px;transform:scaleX(0.89744)"><span style="color:#23c552">?</span> <span style="color:#a0a5ad;font-weight:bold">Provide installation instructions for your application.</span> <span style="color:#3d8ff0">Anyone can use it</span></div><div class="abs term" style="left:668.60px;top:1125px;transform:scaleX(0.89744)"><span style="color:#23c552">?</span> <span style="color:#a0a5ad;font-weight:bold">Provide information of application usage.</span> <span style="color:#3d8ff0">open to anyone</span></div><div class="abs term" style="left:668.60px;top:1155px;transform:scaleX(0.89744)"><span style="color:#23c552">?</span> <span style="color:#a0a5ad;font-weight:bold">Provide contribution guidelines in regards to your application.</span> <span style="color:#3d8ff0"></span></div><div class="abs" style="left:1592.60px;top:1154.00px;width:14.00px;height:30.00px;background:#a3a7ae;"></div>
</body></html>
